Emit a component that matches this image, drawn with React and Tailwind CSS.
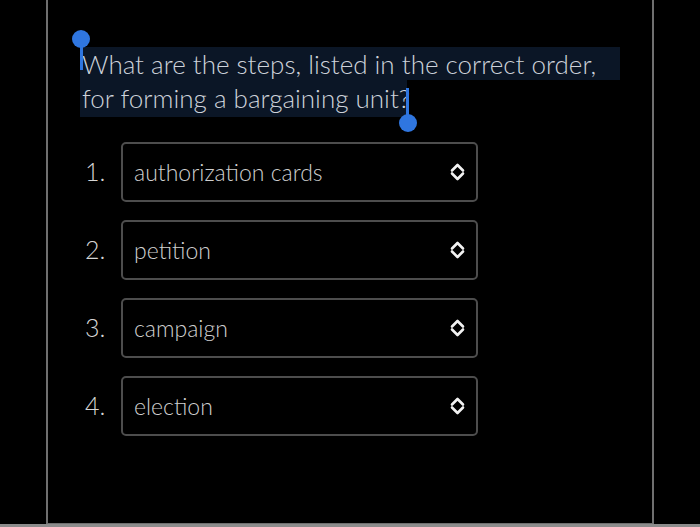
import React from "react";

const STEPS = ["authorization cards", "petition", "campaign", "election"];

function Chevrons() {
  return (
    <svg width="15" height="18" viewBox="0 0 15 18" fill="none" stroke="#f2f2f2" strokeWidth="2.6" strokeLinecap="round" strokeLinejoin="round">
      <polyline points="2,7.5 7.5,2 13,7.5" />
      <polyline points="2,10.5 7.5,16 13,10.5" />
    </svg>
  );
}

export default function App() {
  return (
    <div className="flex h-[527px] w-[700px] flex-col bg-black" style={{ fontFamily: "Lato, 'Open Sans', sans-serif" }}>
      <div className="flex flex-1">
        <div className="relative ml-[46px] w-[608px] border-x-2 border-b border-[#6f6f6f]">
          {/* question, shown as selected text */}
          <div className="relative whitespace-nowrap pl-[32px] pt-[47px] text-[26px] font-light text-[#cdd2da]">
            <span className="block h-[33px] w-[540px] bg-[#0b1626] pl-[2px] leading-[35px]">
              What are the steps, listed in the correct order,
            </span>
            <span className="block h-[37px] w-[327px] bg-[#0b1626] pl-[2px] leading-[37px]">
              for forming a bargaining unit?
            </span>

            {/* selection handles */}
            <span className="absolute left-[32px] top-[39px] h-[31px] w-[3px] bg-[#2f76e0]" />
            <span className="absolute left-[24px] top-[30px] h-[18px] w-[18px] rounded-full bg-[#2f76e0]" />
            <span className="absolute left-[358px] top-[88px] h-[32px] w-[3px] bg-[#2f76e0]" />
            <span className="absolute left-[351px] top-[114px] h-[18px] w-[18px] rounded-full bg-[#2f76e0]" />
          </div>

          <div className="mt-[25px] flex flex-col gap-[18px]">
            {STEPS.map((step, i) => (
              <div key={step} className="flex items-center">
                <span className="w-[73px] pl-[37px] text-[25px] font-light text-[#d6d6d6]">{i + 1}.</span>
                <div className="flex h-[60px] w-[357px] items-center justify-between rounded-[5px] border-2 border-[#4d4d4d] bg-black pl-[11px] pr-[11px]">
                  <span className="text-[23px] font-light text-[#cfcfcf]">{step}</span>
                  <Chevrons />
                </div>
              </div>
            ))}
          </div>
        </div>
      </div>
      <div className="h-[3px] bg-[#8c8c8c]" />
    </div>
  );
}
